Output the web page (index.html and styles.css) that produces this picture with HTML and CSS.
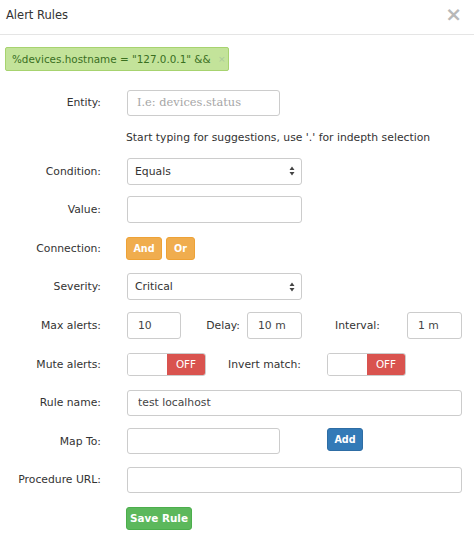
FILE: index.html
```
<!DOCTYPE html>
<html>
<head>
<meta charset="utf-8">
<link rel="stylesheet" href="styles.css">
</head>
<body>
<div class="modal">
  <div class="modal-header">
    <span class="title">Alert Rules</span>
    <span class="close">&times;</span>
  </div>
  <div class="modal-body">
    <div class="tag">%devices.hostname = "127.0.0.1" &amp;&amp; <span class="tag-x">&times;</span></div>

    <div class="row">
      <label class="lbl">Entity:</label>
      <input class="ctl w153" type="text" placeholder="I.e: devices.status">
    </div>
    <div class="help">Start typing for suggestions, use '.' for indepth selection</div>

    <div class="row">
      <label class="lbl">Condition:</label>
      <div class="ctl w175 select"><span>Equals</span>
        <svg class="arrows" width="6" height="10" viewBox="0 0 6 10"><path d="M3 0.5 L5.5 4 H0.5 Z M3 9.5 L5.5 6 H0.5 Z" fill="#444"/></svg>
      </div>
    </div>

    <div class="row">
      <label class="lbl">Value:</label>
      <input class="ctl w175" type="text">
    </div>

    <div class="row">
      <label class="lbl">Connection:</label>
      <div class="btns">
        <span class="btn orange w36">And</span>
        <span class="btn orange w29">Or</span>
      </div>
    </div>

    <div class="row">
      <label class="lbl">Severity:</label>
      <div class="ctl w175 select"><span>Critical</span>
        <svg class="arrows" width="6" height="10" viewBox="0 0 6 10"><path d="M3 0.5 L5.5 4 H0.5 Z M3 9.5 L5.5 6 H0.5 Z" fill="#444"/></svg>
      </div>
    </div>

    <div class="row">
      <label class="lbl">Max alerts:</label>
      <input class="ctl w54 txt" type="text" value="10">
      <label class="inl delay">Delay:</label>
      <input class="ctl w55 txt" type="text" value="10 m">
      <label class="inl interval">Interval:</label>
      <input class="ctl w55 txt" type="text" value="1 m">
    </div>

    <div class="row">
      <label class="lbl">Mute alerts:</label>
      <div class="toggle"><span class="t-on"></span><span class="t-off">OFF</span></div>
      <label class="inl invert">Invert match:</label>
      <div class="toggle"><span class="t-on"></span><span class="t-off">OFF</span></div>
    </div>

    <div class="row">
      <label class="lbl">Rule name:</label>
      <input class="ctl w335 txt" type="text" value="test localhost">
    </div>

    <div class="row">
      <label class="lbl">Map To:</label>
      <input class="ctl w153" type="text">
      <span class="btn blue add">Add</span>
    </div>

    <div class="row">
      <label class="lbl">Procedure URL:</label>
      <input class="ctl w335" type="text">
    </div>

    <div class="row">
      <span class="lbl"></span>
      <span class="btn green save">Save Rule</span>
    </div>
  </div>
</div>
</body>
</html>
```

FILE: styles.css
```
html, body {
  margin: 0;
  padding: 0;
  background: #fff;
}
body {
  font-family: "DejaVu Sans", Verdana, sans-serif;
  font-size: 10.8px;
  color: #333;
}
.modal {
  width: 474px;
  height: 543px;
}
.modal-header {
  height: 35px;
  border-bottom: 1px solid #e5e5e5;
  display: flex;
  align-items: center;
  justify-content: space-between;
  padding: 0 12px 0 6px;
  box-sizing: border-box;
}
.title {
  font-size: 11.5px;
  color: #333;
  margin-top: -5px;
}
.close {
  font-size: 20px;
  font-weight: bold;
  color: #b8b8b8;
  margin-top: -6px;
}
.modal-body {
  padding: 12px 0 0 0;
}
.tag {
  margin-left: 5px;
  width: 224px;
  height: 24px;
  box-sizing: border-box;
  background: #c3e39a;
  border: 1px solid #a7d36f;
  border-radius: 2px;
  color: #3a6f1f;
  font-size: 10.4px;
  display: flex;
  align-items: center;
  padding-left: 6px;
  white-space: pre;
  margin-bottom: 18px;
}
.tag-x {
  color: #a9c99a;
  font-size: 9px;
  margin-left: 4px;
}
.row {
  display: flex;
  align-items: center;
  height: 27px;
  margin-bottom: 11.6px;
}
.lbl {
  width: 101px;
  text-align: right;
  margin-right: 26px;
  flex: none;
  color: #333;
}
.ctl {
  box-sizing: border-box;
  height: 27px;
  border: 1px solid #ccc;
  border-radius: 3px;
  background: #fff;
  font-family: "DejaVu Sans", Verdana, sans-serif;
  font-size: 10.8px;
  color: #444;
  padding: 0 9px;
  outline: none;
  margin: 0;
  flex: none;
}
.ctl::placeholder {
  font-family: "DejaVu Serif", "Liberation Serif", serif;
  color: #a6a6a6;
  font-size: 11.4px;
}
.w153 { width: 153px; height: 26px; }
.w175 { width: 175px; }
.w54 { width: 54px; }
.w55 { width: 55px; }
.w335 { width: 335px; height: 26px; }
.txt { padding-left: 10px; }
.select {
  display: flex;
  align-items: center;
  justify-content: space-between;
  padding: 0 6px 0 7px;
  color: #333;
}
.arrows { display: block; }
.help {
  margin-left: 126px;
  height: 20px;
  line-height: 20px;
  margin-top: 7px;
  margin-bottom: 10px;
  color: #333;
}
.btns {
  display: flex;
  gap: 4px;
  margin-left: -1px;
}
.btn {
  display: inline-flex;
  align-items: center;
  justify-content: center;
  height: 23px;
  box-sizing: border-box;
  border-radius: 3px;
  color: #fff;
  font-weight: bold;
  font-size: 9.6px;
}
.orange { background: #f0ad4e; border: 1px solid #eea236; }
.w36 { width: 36px; }
.w29 { width: 29px; }
.blue { background: #337ab7; border: 1px solid #2e6da4; }
.green { background: #5cb85c; border: 1px solid #4cae4c; }
.add { width: 36px; margin-left: 47px; align-self: flex-start; }
.save { width: 66px; margin-left: -1px; font-size: 10.4px; }
.inl { flex: none; color: #333; box-sizing: border-box; }
.delay { width: 66px; text-align: right; padding-right: 7px; }
.interval { width: 105px; padding-left: 33px; }
.invert { width: 121px; padding-left: 22px; }
.toggle {
  display: flex;
  width: 79px;
  height: 23px;
  box-sizing: border-box;
  border: 1px solid #ccc;
  border-radius: 3px;
  overflow: hidden;
  flex: none;
}
.t-on { width: 39px; background: #fff; }
.t-off {
  flex: 1;
  background: #d9534f;
  color: #fff;
  font-size: 10.4px;
  display: flex;
  align-items: center;
  justify-content: center;
}
```
